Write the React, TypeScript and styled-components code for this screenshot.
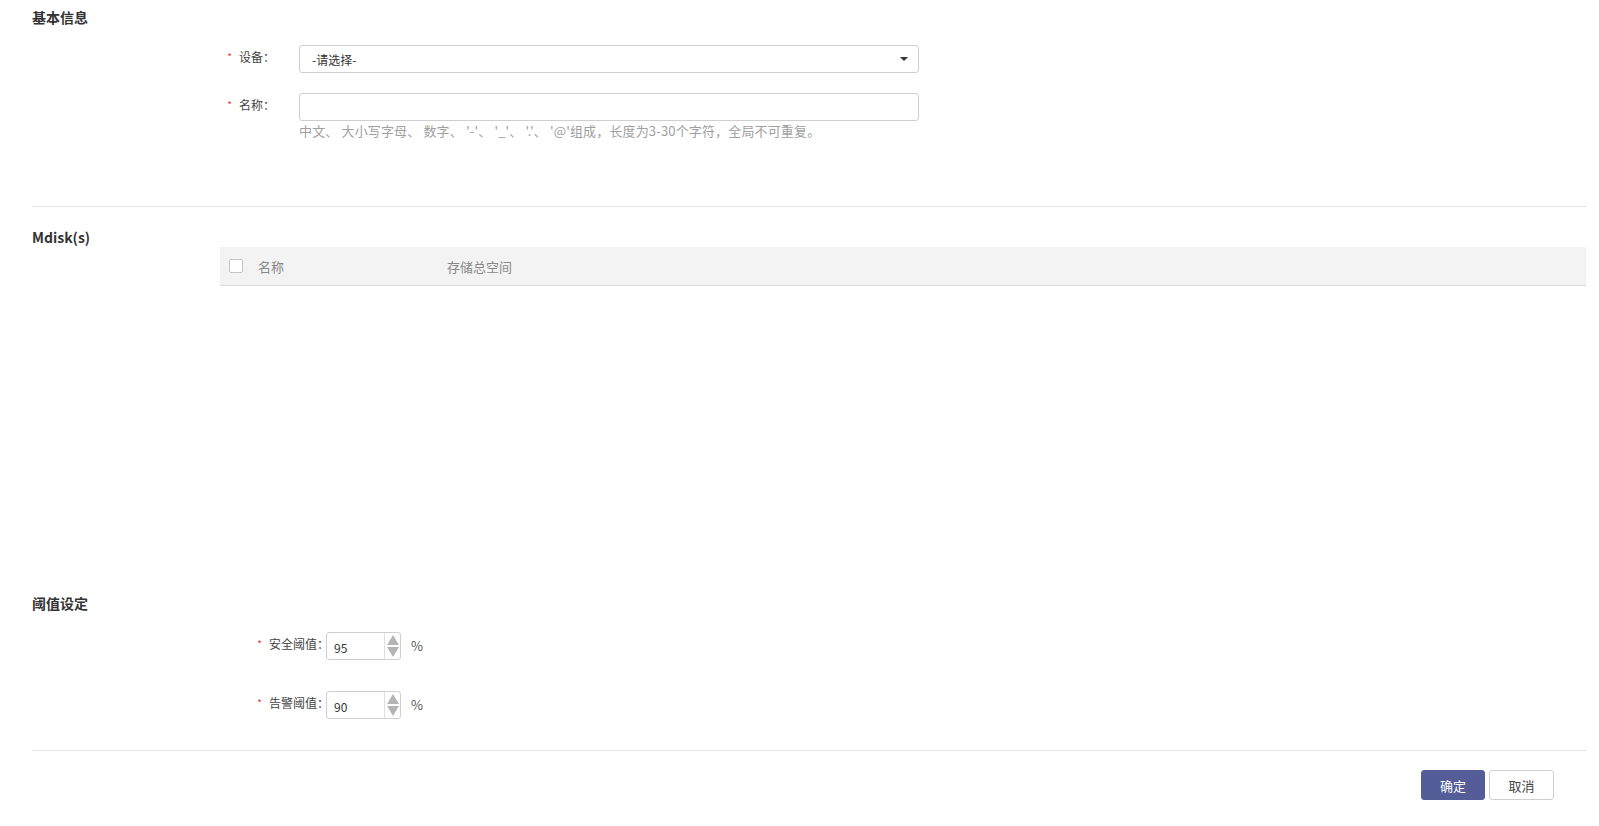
import React from "react";
import styled, { createGlobalStyle } from "styled-components";

const GlobalStyle = createGlobalStyle`
  html, body {
    margin: 0;
    padding: 0;
    background: #fff;
  }
  body {
    font-family: "Noto Sans CJK SC", "Noto Sans", sans-serif;
    color: #333;
  }
`;

const Page = styled.div`
  width: 1599px;
  height: 826px;
  padding: 0 13px 0 32px;
  box-sizing: border-box;
  overflow: hidden;
`;

const Section = styled.div<{ $h: number; $border?: boolean }>`
  height: ${(p) => p.$h}px;
  box-sizing: border-box;
  border-bottom: ${(p) => (p.$border ? "1px solid #e2e2e2" : "none")};
`;

const Title = styled.div<{ $top: number }>`
  padding-top: ${(p) => p.$top}px;
  font-size: 14px;
  line-height: 20px;
  font-weight: 700;
  color: #333;
`;

const Row = styled.div<{ $top: number }>`
  display: flex;
  align-items: flex-start;
  margin-top: ${(p) => p.$top}px;
`;

// $pull lets the label text sit a few px into the gap before the field
const Label = styled.div<{ $w: number; $pr: number; $pull?: number }>`
  width: ${(p) => p.$w}px;
  padding-right: ${(p) => p.$pr}px;
  margin-right: ${(p) => -(p.$pull ?? 0)}px;
  box-sizing: border-box;
  display: flex;
  justify-content: flex-end;
  align-items: center;
  height: 28px;
  font-size: 12px;
  color: #444;
  flex-shrink: 0;
  position: relative;
  top: -3px;
`;

const Star = styled.span`
  color: #e0383e;
  font-size: 10px;
  margin-right: 7px;
`;

const Field = styled.div`
  display: flex;
  flex-direction: column;
`;

const SelectBox = styled.div`
  width: 620px;
  height: 28px;
  box-sizing: border-box;
  border: 1px solid #cfcfcf;
  border-radius: 3px;
  display: flex;
  align-items: center;
  justify-content: space-between;
  padding: 0 10px 0 12px;
  font-size: 12px;
  color: #333;
`;

const Caret = styled.span`
  width: 0;
  height: 0;
  border-left: 4px solid transparent;
  border-right: 4px solid transparent;
  border-top: 4px solid #333;
`;

const TextInput = styled.input`
  width: 620px;
  height: 28px;
  box-sizing: border-box;
  border: 1px solid #cfcfcf;
  border-radius: 3px;
  outline: none;
  padding: 0 10px;
  font-family: inherit;
`;

const Help = styled.div`
  font-size: 13px;
  line-height: 18px;
  color: #a0a0a0;
  margin-top: 1px;
  letter-spacing: 0.15px;
`;

const Table = styled.div`
  margin-left: 188px;
  height: 39px;
  box-sizing: border-box;
  background: #f3f3f3;
  border-bottom: 1px solid #dcdcdc;
  display: flex;
  align-items: center;
  padding-left: 9px;
  font-size: 13px;
  color: #888;
`;

const Check = styled.span`
  width: 12px;
  height: 12px;
  border: 1px solid #c4c4c4;
  border-radius: 2px;
  background: #fff;
  margin-right: 15px;
`;

const Col = styled.span<{ $w: number }>`
  width: ${(p) => p.$w}px;
`;

const Spinner = styled.div`
  width: 75px;
  height: 28px;
  box-sizing: border-box;
  border: 1px solid #cfcfcf;
  border-radius: 3px;
  display: flex;
`;

const SpinValue = styled.div`
  flex: 1;
  font-size: 12px;
  color: #333;
  padding-left: 7px;
  display: flex;
  align-items: center;
  padding-top: 3px;
`;

const SpinArrows = styled.div`
  width: 15px;
  border-left: 1px solid #e0e0e0;
  display: flex;
  flex-direction: column;
  align-items: center;
  justify-content: center;
  gap: 2px;
`;

const Tri = styled.span<{ $up?: boolean }>`
  width: 0;
  height: 0;
  border-left: 6px solid transparent;
  border-right: 6px solid transparent;
  ${(p) =>
    p.$up ? "border-bottom: 10px solid #b5b5b5;" : "border-top: 10px solid #b5b5b5;"}
`;

const Unit = styled.span`
  font-size: 13px;
  color: #555;
  margin-left: 10px;
  line-height: 28px;
`;

const Footer = styled.div`
  display: flex;
  justify-content: flex-end;
  gap: 4px;
  padding: 19px 32px 0 0;
`;

const Button = styled.button<{ $primary?: boolean }>`
  width: ${(p) => (p.$primary ? 64 : 65)}px;
  height: 30px;
  border-radius: 3px;
  font-family: inherit;
  font-size: 13px;
  cursor: pointer;
  border: 1px solid ${(p) => (p.$primary ? "#545d97" : "#cfcfcf")};
  background: ${(p) => (p.$primary ? "#545d97" : "#fff")};
  color: ${(p) => (p.$primary ? "#fff" : "#444")};
`;

const thresholds = [
  { label: "安全阈值：", value: 95, top: 19 },
  { label: "告警阈值：", value: 90, top: 31 },
];

const App: React.FC = () => {
  return (
    <Page>
      <GlobalStyle />
      <Section $h={207} $border>
        <Title $top={7}>基本信息</Title>
        <Row $top={18}>
          <Label $w={267} $pr={24}>
            <Star>*</Star>设备：
          </Label>
          <SelectBox>
            <span>-请选择-</span>
            <Caret />
          </SelectBox>
        </Row>
        <Row $top={20}>
          <Label $w={267} $pr={24}>
            <Star>*</Star>名称：
          </Label>
          <Field>
            <TextInput />
            <Help>中文、 大小写字母、 数字、 '-'、 '_'、 '.'、 '@'组成，长度为3-30个字符，全局不可重复。</Help>
          </Field>
        </Row>
      </Section>

      <Section $h={544} $border>
        <Title $top={20}>Mdisk(s)</Title>
        <Table>
          <Check />
          <Col $w={189}>名称</Col>
          <Col $w={200}>存储总空间</Col>
        </Table>
        <Title $top={307}>阈值设定</Title>
        {thresholds.map((t) => (
          <Row $top={t.top} key={t.label}>
            <Label $w={297} $pr={0} $pull={3}>
              <Star>*</Star>
              {t.label}
            </Label>
            <Spinner>
              <SpinValue>{t.value}</SpinValue>
              <SpinArrows>
                <Tri $up />
                <Tri />
              </SpinArrows>
            </Spinner>
            <Unit>%</Unit>
          </Row>
        ))}
      </Section>

      <Footer>
        <Button $primary>确定</Button>
        <Button>取消</Button>
      </Footer>
    </Page>
  );
};

export default App;
